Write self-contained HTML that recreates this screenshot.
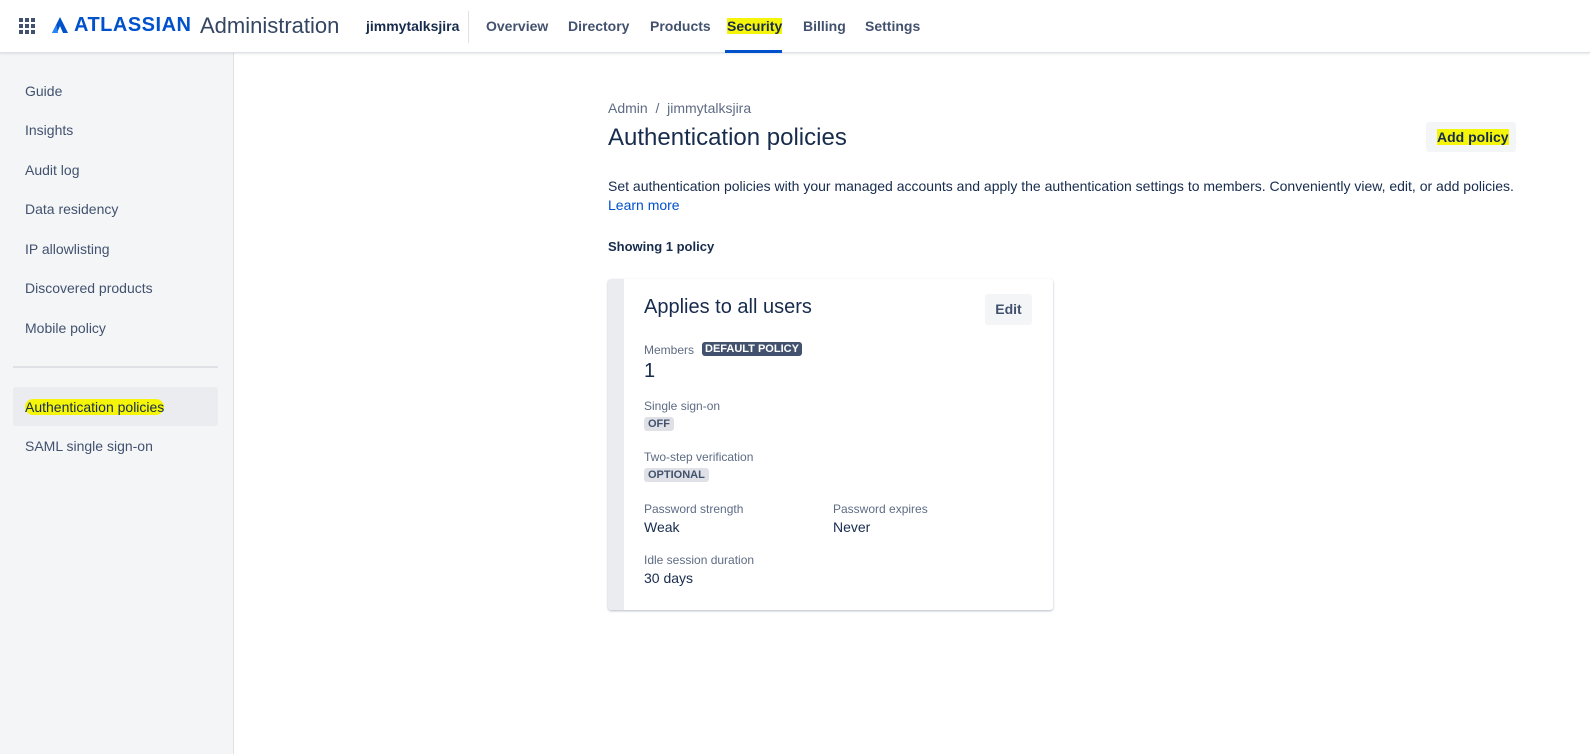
<!DOCTYPE html>
<html><head><style>
*{box-sizing:border-box;margin:0;padding:0}
body{width:1590px;height:754px;overflow:hidden;font-family:"Liberation Sans",sans-serif;color:#172b4d;background:#fff;position:relative;font-size:14px}
.hdr{position:absolute;left:0;top:0;width:1590px;height:53px;background:#fff;border-bottom:1px solid #dfe1e6;box-shadow:0 1px 2px rgba(9,30,66,.1);z-index:2}
.abs{position:absolute;white-space:nowrap}
.nav{top:18px;font-size:14px;color:#42526e;font-weight:bold}
.hl{background:#f5f50a}
.side{position:absolute;left:0;top:53px;width:234px;height:701px;background:#f4f5f7;border-right:1px solid #dfe1e6}
.si{position:absolute;left:25px;font-size:14px;color:#42526e}
.lbl{font-size:12px;color:#5e6c84}
.val{font-size:14px;color:#172b4d}
.lz{display:inline-block;font-size:11px;font-weight:bold;background:#dfe1e6;color:#42526e;padding:1px 4px;border-radius:3px}
</style></head><body>
<div class="hdr">
<svg class="abs" style="left:19px;top:18px" width="16" height="16"><g fill="#42526e"><rect x="0" y="0" width="4" height="4"/><rect x="6" y="0" width="4" height="4"/><rect x="12" y="0" width="4" height="4"/><rect x="0" y="6" width="4" height="4"/><rect x="6" y="6" width="4" height="4"/><rect x="12" y="6" width="4" height="4"/><rect x="0" y="12" width="4" height="4"/><rect x="6" y="12" width="4" height="4"/><rect x="12" y="12" width="4" height="4"/></g></svg>
<svg class="abs" style="left:51px;top:16px" width="18" height="18" viewBox="0 0 18 18"><path d="M9 1 L17 17 H12 L9 10 L6 17 H1 Z" fill="#0052cc"/><path d="M5.5 9 L1 17 H7 Z" fill="#2684ff"/></svg>
<div class="abs" style="left:74px;top:14px;font-size:20px;font-weight:bold;color:#0052cc;letter-spacing:.5px">ATLASSIAN</div>
<div class="abs" style="left:200px;top:13px;font-size:22px;color:#344563">Administration</div>
<div class="abs nav" style="left:366px;color:#172b4d">jimmytalksjira</div>
<div class="abs" style="left:468px;top:11px;width:1px;height:32px;background:#dfe1e6"></div>
<div class="abs nav" style="left:486px">Overview</div>
<div class="abs nav" style="left:568px">Directory</div>
<div class="abs nav" style="left:650px">Products</div>
<div class="abs nav" style="left:727px"><span class="hl" style="color:#172b4d">Security</span></div>
<div class="abs" style="left:725px;top:50px;width:57px;height:3px;background:#0052cc"></div>
<div class="abs nav" style="left:803px">Billing</div>
<div class="abs nav" style="left:865px">Settings</div>
</div>
<div class="side">
<div class="si" style="top:30px">Guide</div>
<div class="si" style="top:69px">Insights</div>
<div class="si" style="top:109px">Audit log</div>
<div class="si" style="top:148px">Data residency</div>
<div class="si" style="top:188px">IP allowlisting</div>
<div class="si" style="top:227px">Discovered products</div>
<div class="si" style="top:267px">Mobile policy</div>
<div class="abs" style="left:13px;top:313px;width:205px;height:2px;background:#dfe1e6"></div>
<div class="abs" style="left:13px;top:334px;width:205px;height:39px;background:#ebecf0;border-radius:3px"></div>
<div class="si" style="top:346px"><span class="hl" style="color:#172b4d;border-radius:8px">Authentication policies</span></div>
<div class="si" style="top:385px">SAML single sign-on</div>
</div>
<div class="abs" style="left:608px;top:100px;color:#5e6c84">Admin &nbsp;/&nbsp; jimmytalksjira</div>
<div class="abs" style="left:608px;top:124px;font-size:24px;color:#172b4d">Authentication policies</div>
<div class="abs" style="left:1426px;top:122px;width:90px;height:30px;background:#f4f5f7;border-radius:3px"></div>
<div class="abs" style="left:1437px;top:129px;font-weight:bold"><span class="hl">Add policy</span></div>
<div class="abs" style="left:608px;top:178px;color:#172b4d">Set authentication policies with your managed accounts and apply the authentication settings to members. Conveniently view, edit, or add policies.</div>
<div class="abs" style="left:608px;top:197px;color:#0052cc">Learn more</div>
<div class="abs" style="left:608px;top:239px;font-weight:bold;font-size:13px">Showing 1 policy</div>
<div class="abs" style="left:608px;top:279px;width:445px;height:331px;background:#fff;border-radius:3px;box-shadow:0 1px 2px rgba(9,30,66,.3);overflow:hidden">
<div class="abs" style="left:0;top:0;width:16px;height:331px;background:#ebecf0"></div>
<div class="abs" style="left:36px;top:17px;font-size:20px">Applies to all users</div>
<div class="abs" style="left:377px;top:15px;width:47px;height:31px;background:#f4f5f7;border-radius:3px;text-align:center;line-height:31px;color:#42526e;font-weight:bold">Edit</div>
<div class="abs lbl" style="left:36px;top:64px">Members</div>
<div class="abs" style="left:94px;top:63px;background:#42526e;color:#fff;font-size:11px;font-weight:bold;padding:1px 3px;border-radius:3px">DEFAULT POLICY</div>
<div class="abs" style="left:36px;top:81px;font-size:20px">1</div>
<div class="abs lbl" style="left:36px;top:120px">Single sign-on</div>
<div class="abs lz" style="left:36px;top:138px">OFF</div>
<div class="abs lbl" style="left:36px;top:171px">Two-step verification</div>
<div class="abs lz" style="left:36px;top:189px">OPTIONAL</div>
<div class="abs lbl" style="left:36px;top:223px">Password strength</div>
<div class="abs val" style="left:36px;top:240px">Weak</div>
<div class="abs lbl" style="left:225px;top:223px">Password expires</div>
<div class="abs val" style="left:225px;top:240px">Never</div>
<div class="abs lbl" style="left:36px;top:274px">Idle session duration</div>
<div class="abs val" style="left:36px;top:291px">30 days</div>
</div>
</body></html>
